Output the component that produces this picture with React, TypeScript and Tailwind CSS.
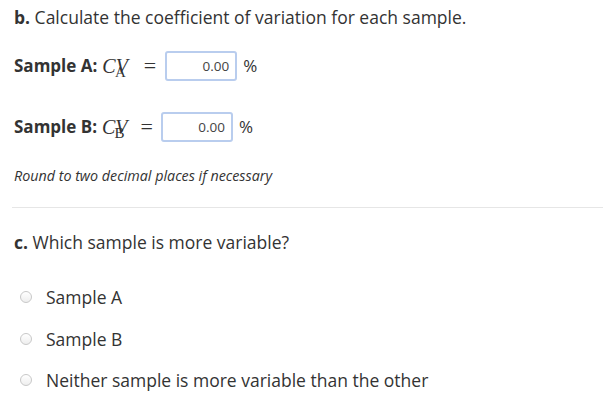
const options = ['Sample A', 'Sample B', 'Neither sample is more variable than the other'];

function CvLabel({ sub }: { sub: string }) {
  return (
    <span className="ml-[5px] font-['Liberation_Serif',serif] text-[20px] italic leading-none text-[#333]">
      CV
      <span className="relative top-[4px] -ml-[13px] text-[15px] not-italic">{sub}</span>
    </span>
  );
}

function AnswerRow({ label, sub, eqGap, boxGap }: { label: string; sub: string; eqGap: string; boxGap: string }) {
  return (
    <div className="flex h-[30px] items-center">
      <span className="text-[17px] font-bold">{label}</span>
      <CvLabel sub={sub} />
      <span className={`font-['Liberation_Serif',serif] text-[22px] leading-none ${eqGap}`}>=</span>
      <div
        className={`flex h-[30px] w-[72px] items-center justify-end rounded-[3px] border-2 border-[#b9cdee] pr-[6px] text-[13.5px] text-[#444] ${boxGap}`}
      >
        0.00
      </div>
      <span className="ml-[6px] text-[17px]">%</span>
    </div>
  );
}

export default function App() {
  return (
    <div className="h-[408px] w-[603px] bg-white font-['Open_Sans',sans-serif] text-[17.5px] text-[#333]">
      <div className="pl-[14px] pt-[5px]">
        <p className="leading-[24px]">
          <span className="font-bold">b.</span> Calculate the coefficient of variation for each sample.
        </p>
        <div className="mt-[22px]">
          <AnswerRow label="Sample A:" sub="A" eqGap="ml-[18px]" boxGap="ml-[9px]" />
        </div>
        <div className="mt-[31px]">
          <AnswerRow label="Sample B:" sub="B" eqGap="ml-[16px]" boxGap="ml-[8px]" />
        </div>
        <p className="mt-[24px] text-[14.3px] italic leading-[20px]">Round to two decimal places if necessary</p>
      </div>
      <div className="ml-[12px] mt-[21px] border-t border-[#e6e6e6]" />
      <div className="pl-[14px] pt-[22px]">
        <p className="leading-[24px]">
          <span className="font-bold">c.</span> Which sample is more variable?
        </p>
        <div className="mt-[31px] flex flex-col gap-[17.5px]">
          {options.map((opt) => (
            <label key={opt} className="flex h-[24px] items-center">
              <span className="ml-[6px] h-[12px] w-[12px] rounded-full border border-[#c8c8c8] bg-gradient-to-b from-white to-[#eeeeee]" />
              <span className="ml-[14px] leading-[24px]">{opt}</span>
            </label>
          ))}
        </div>
      </div>
    </div>
  );
}
